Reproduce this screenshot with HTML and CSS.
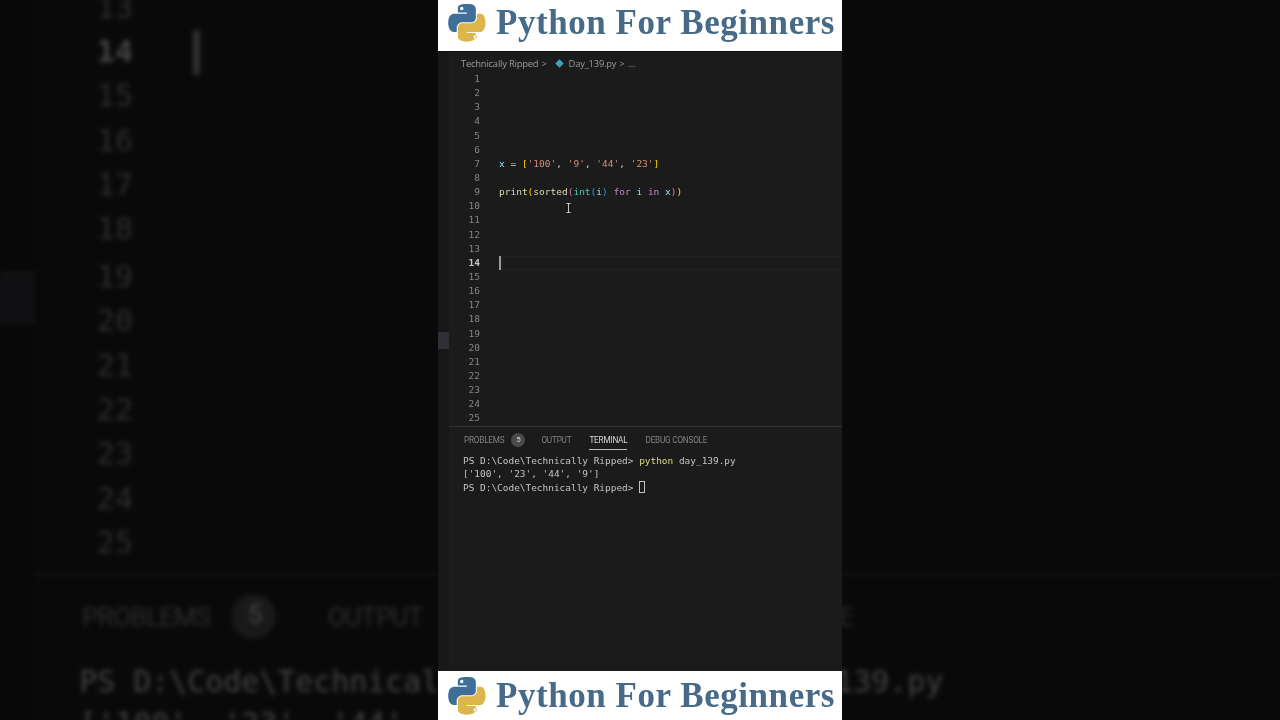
FILE: index.html
```html
<!DOCTYPE html>
<html lang="en">
<head>
<meta charset="utf-8">
<title>Python For Beginners</title>
<link rel="stylesheet" href="styles.css">
</head>
<body>
<div class="backdrop" aria-hidden="true">
  <div class="panel panel-zoomed">
    <div class="rail"><span class="slider"></span></div>
    <div class="main">
      <div class="crumbs"><span>Technically Ripped</span><span class="sep">&gt;</span><span class="file-dot"></span><span>Day_139.py</span><span class="sep">&gt;</span><span>...</span></div>
      <div class="editor">
        <div class="row"><span class="num">1</span></div>
        <div class="row"><span class="num">2</span></div>
        <div class="row"><span class="num">3</span></div>
        <div class="row"><span class="num">4</span></div>
        <div class="row"><span class="num">5</span></div>
        <div class="row"><span class="num">6</span></div>
        <div class="row"><span class="num">7</span></div>
        <div class="row"><span class="num">8</span></div>
        <div class="row"><span class="num">9</span></div>
        <div class="row"><span class="num">10</span></div>
        <div class="row"><span class="num">11</span></div>
        <div class="row"><span class="num">12</span></div>
        <div class="row"><span class="num">13</span></div>
        <div class="row current"><span class="num">14</span><span class="caret"></span></div>
        <div class="row"><span class="num">15</span></div>
        <div class="row"><span class="num">16</span></div>
        <div class="row"><span class="num">17</span></div>
        <div class="row"><span class="num">18</span></div>
        <div class="row"><span class="num">19</span></div>
        <div class="row"><span class="num">20</span></div>
        <div class="row"><span class="num">21</span></div>
        <div class="row"><span class="num">22</span></div>
        <div class="row"><span class="num">23</span></div>
        <div class="row"><span class="num">24</span></div>
        <div class="row"><span class="num">25</span></div>
      </div>
      <div class="bottom">
        <div class="tabs">
          <span>PROBLEMS</span><span class="badge">5</span><span class="tab-gap">OUTPUT</span><span class="tab-gap active">TERMINAL</span><span class="tab-gap">DEBUG CONSOLE</span>
        </div>
        <div class="terminal">
          <div class="term-line">PS D:\Code\Technically Ripped&gt; <span class="cmd">python</span> day_139.py</div>
          <div class="term-line">['100', '23', '44', '9']</div>
          <div class="term-line">PS D:\Code\Technically Ripped&gt; <span class="term-cursor"></span></div>
        </div>
      </div>
    </div>
  </div>
</div>

<div class="column">
  <header class="banner">
    <svg class="logo" viewBox="0 0 112 113"><path class="py-blue" d="M54.92 0C50.34.02 45.96.41 42.11 1.09 30.76 3.1 28.7 7.29 28.7 15.04V25.26H55.51V28.67H18.64C10.85 28.67 4.02 33.35 1.89 42.26-.57 52.47-.68 58.85 1.89 69.5 3.79 77.43 8.34 83.08 16.14 83.08H25.36V70.83C25.36 61.98 33.01 54.17 42.11 54.17H68.89C76.34 54.17 82.29 48.03 82.29 40.54V15.04C82.29 7.78 76.17 2.32 68.89 1.09 64.28.33 59.5-.02 54.92 0ZM40.42 8.23C43.19 8.23 45.45 10.53 45.45 13.36 45.45 16.17 43.19 18.45 40.42 18.45 37.64 18.45 35.39 16.17 35.39 13.36 35.39 10.53 37.64 8.23 40.42 8.23Z"/><path class="py-yellow" d="M85.64 28.67V40.5C85.64 49.67 77.86 57.5 68.89 57.5H42.11C34.77 57.5 28.7 63.78 28.7 71.13V96.63C28.7 103.89 35.01 108.17 42.11 110.25 50.6 112.75 58.74 113.2 68.89 110.25 75.63 108.3 82.29 104.37 82.29 96.63V86.4H55.51V83H95.7C103.49 83 106.4 77.56 109.11 69.5 111.91 61.1 111.79 53 109.11 42.2 107.18 34.4 103.5 28.67 95.7 28.67ZM80.64 93.2C83.42 93.2 85.67 95.48 85.67 98.29 85.67 101.12 83.42 103.42 80.64 103.42 77.87 103.42 75.61 101.12 75.61 98.29 75.61 95.48 77.87 93.2 80.64 93.2Z"/></svg>
    <span class="banner-title">Python For Beginners</span>
  </header>

  <div class="panel">
    <div class="rail"><span class="slider"></span></div>
    <div class="main">
      <div class="crumbs"><span>Technically Ripped</span><span class="sep">&gt;</span><span class="file-dot"></span><span>Day_139.py</span><span class="sep">&gt;</span><span>...</span></div>
      <div class="editor">
        <div class="row"><span class="num">1</span></div>
        <div class="row"><span class="num">2</span></div>
        <div class="row"><span class="num">3</span></div>
        <div class="row"><span class="num">4</span></div>
        <div class="row"><span class="num">5</span></div>
        <div class="row"><span class="num">6</span></div>
        <div class="row"><span class="num">7</span><code class="code"><span class="var">x</span> = <span class="br1">[</span><span class="str">'100'</span>, <span class="str">'9'</span>, <span class="str">'44'</span>, <span class="str">'23'</span><span class="br1">]</span></code></div>
        <div class="row"><span class="num">8</span></div>
        <div class="row"><span class="num">9</span><code class="code"><span class="fn">print</span><span class="br1">(</span><span class="fn">sorted</span><span class="br2">(</span><span class="ty">int</span><span class="br3">(</span><span class="var">i</span><span class="br3">)</span> <span class="kw">for</span> <span class="var">i</span> <span class="kw">in</span> <span class="var">x</span><span class="br2">)</span><span class="br1">)</span></code></div>
        <div class="row"><span class="num">10</span></div>
        <div class="row"><span class="num">11</span></div>
        <div class="row"><span class="num">12</span></div>
        <div class="row"><span class="num">13</span></div>
        <div class="row current"><span class="num">14</span><span class="caret"></span></div>
        <div class="row"><span class="num">15</span></div>
        <div class="row"><span class="num">16</span></div>
        <div class="row"><span class="num">17</span></div>
        <div class="row"><span class="num">18</span></div>
        <div class="row"><span class="num">19</span></div>
        <div class="row"><span class="num">20</span></div>
        <div class="row"><span class="num">21</span></div>
        <div class="row"><span class="num">22</span></div>
        <div class="row"><span class="num">23</span></div>
        <div class="row"><span class="num">24</span></div>
        <div class="row"><span class="num">25</span></div>
        <svg class="ibeam" viewBox="0 0 5 10"><path d="M0.5 .5H4.500M2.500 .5V9.500M.5 9.500H4.500"/></svg>
      </div>
      <div class="bottom">
        <div class="tabs">
          <span>PROBLEMS</span><span class="badge">5</span><span class="tab-gap">OUTPUT</span><span class="tab-gap active">TERMINAL</span><span class="tab-gap">DEBUG CONSOLE</span>
        </div>
        <div class="terminal">
          <div class="term-line">PS D:\Code\Technically Ripped&gt; <span class="cmd">python</span> day_139.py</div>
          <div class="term-line">['100', '23', '44', '9']</div>
          <div class="term-line">PS D:\Code\Technically Ripped&gt; <span class="term-cursor"></span></div>
        </div>
      </div>
    </div>
  </div>

  <footer class="banner banner-foot">
    <svg class="logo" viewBox="0 0 112 113"><path class="py-blue" d="M54.92 0C50.34.02 45.96.41 42.11 1.09 30.76 3.1 28.7 7.29 28.7 15.04V25.26H55.51V28.67H18.64C10.85 28.67 4.02 33.35 1.89 42.26-.57 52.47-.68 58.85 1.89 69.5 3.79 77.43 8.34 83.08 16.14 83.08H25.36V70.83C25.36 61.98 33.01 54.17 42.11 54.17H68.89C76.34 54.17 82.29 48.03 82.29 40.54V15.04C82.29 7.78 76.17 2.32 68.89 1.09 64.28.33 59.5-.02 54.92 0ZM40.42 8.23C43.19 8.23 45.45 10.53 45.45 13.36 45.45 16.17 43.19 18.45 40.42 18.45 37.64 18.45 35.39 16.17 35.39 13.36 35.39 10.53 37.64 8.23 40.42 8.23Z"/><path class="py-yellow" d="M85.64 28.67V40.5C85.64 49.67 77.86 57.5 68.89 57.5H42.11C34.77 57.5 28.7 63.78 28.7 71.13V96.63C28.7 103.89 35.01 108.17 42.11 110.25 50.6 112.75 58.74 113.2 68.89 110.25 75.63 108.3 82.29 104.37 82.29 96.63V86.4H55.51V83H95.7C103.49 83 106.4 77.56 109.11 69.5 111.91 61.1 111.79 53 109.11 42.2 107.18 34.4 103.5 28.67 95.7 28.67ZM80.64 93.2C83.42 93.2 85.67 95.48 85.67 98.29 85.67 101.12 83.42 103.42 80.64 103.42 77.87 103.42 75.61 101.12 75.61 98.29 75.61 95.48 77.87 93.2 80.64 93.2Z"/></svg>
    <span class="banner-title">Python For Beginners</span>
  </footer>
</div>
</body>
</html>
```

FILE: styles.css
```css
* { box-sizing: border-box; }
html, body { margin: 0; height: 100%; }
body {
  width: 1280px;
  height: 720px;
  overflow: hidden;
  background: #0a0a0a;
  display: flex;
  justify-content: center;
  position: relative;
}

/* Blurred, dimmed, enlarged copy of the video behind the column */
.backdrop {
  position: absolute;
  inset: 0;
  overflow: hidden;
  background: #0a0a0a;
}
.panel-zoomed {
  position: absolute;
  left: 0;
  top: 0;
  width: 404px;
  height: 620px;
  transform-origin: 0 0;
  transform: translateY(-616px) scale(3.168);
  filter: blur(0.6px) brightness(0.34);
}

.column {
  position: relative;
  width: 404px;
  height: 720px;
  display: flex;
  flex-direction: column;
}

.banner {
  height: 52px;
  flex: none;
  background: #fff;
  border-bottom: 1px solid #0c0c0c;
  display: flex;
  align-items: flex-start;
  padding: 4px 0 0 10px;
  gap: 10px;
}
.banner-foot {
  height: 49px;
  border-bottom: 0;
  padding-top: 6px;
}
.logo { width: 38px; height: 38px; flex: none; filter: blur(0.4px); }
.py-blue { fill: #3f6f98; }
.py-yellow { fill: #dcb64a; }
.banner-title {
  font-family: "Liberation Serif", serif;
  font-weight: 700;
  font-size: 35px;
  line-height: 37px;
  letter-spacing: 0.55px;
  color: #466a88;
  white-space: nowrap;
  filter: blur(0.35px);
}

.panel {
  flex: 1;
  display: flex;
  background: #1b1b1b;
  min-height: 0;
  overflow: hidden;
}
.rail {
  width: 11px;
  flex: none;
  background: #181818;
  position: relative;
}
.slider {
  position: absolute;
  left: 0;
  top: 280px;
  width: 11px;
  height: 17px;
  background: #2f3035;
}
.main {
  flex: 1;
  min-width: 0;
  display: flex;
  flex-direction: column;
  filter: blur(0.35px);
}

.crumbs {
  height: 19px;
  flex: none;
  display: flex;
  align-items: center;
  gap: 3px;
  padding: 3px 0 0 12px;
  font: 9.400px "Open Sans", "Liberation Sans", sans-serif;
  letter-spacing: -0.2px;
  color: #9a9a9a;
}
.sep { color: #999; margin-right: 1px; }
.file-dot {
  width: 7px;
  height: 7px;
  margin: 0 3px 0 5px;
  background: #3f9fc4;
  transform: rotate(45deg) scale(0.85);
}

.editor {
  flex: 1;
  min-height: 0;
  position: relative;
  padding-top: 1px;
  font: 9.500px/14.150px "DejaVu Sans Mono", "Liberation Mono", monospace;
}
.row {
  height: 14.150px;
  display: flex;
  align-items: center;
  white-space: pre;
  color: #d4d4d4;
}
.num {
  width: 31px;
  flex: none;
  text-align: right;
  color: #858585;
}
.code {
  margin-left: 19px;
  font: inherit;
}
.current { position: relative; }
.current::after {
  content: "";
  position: absolute;
  left: 53px;
  right: 0;
  top: 0;
  bottom: 0;
  border: 1px solid #222;
  border-right: 0;
}
.current .num { color: #c6c6c6; font-weight: 700; }
.caret {
  width: 1.500px;
  height: 14px;
  margin-left: 19px;
  background: #9a9a9a;
}
.ibeam {
  position: absolute;
  left: 117px;
  top: 132px;
  width: 5px;
  height: 10px;
  fill: none;
  stroke: #c8c8c8;
  stroke-width: 1;
}
.var { color: #9cdcfe; }
.str { color: #ce9178; }
.fn { color: #dcdcaa; }
.ty { color: #4ec9b0; }
.kw { color: #c586c0; }
.br1 { color: #ffd700; }
.br2 { color: #da70d6; }
.br3 { color: #179fff; }

.bottom {
  height: 245px;
  flex: none;
  border-top: 1px solid #333;
  display: flex;
  flex-direction: column;
}
.tabs {
  display: flex;
  align-items: center;
  height: 25px;
  padding: 0 0 0 15px;
  font: 8.200px Roboto, "Liberation Sans", sans-serif;
  letter-spacing: -0.2px;
  color: #828282;
}
.badge {
  width: 14px;
  height: 14px;
  margin-left: 7px;
  border-radius: 50%;
  background: #4a4a4a;
  color: #cfcfcf;
  font-size: 8px;
  display: flex;
  align-items: center;
  justify-content: center;
}
.tab-gap { margin-left: 18px; position: relative; }
.badge + .tab-gap { margin-left: 16px; }
.active { color: #d8d8d8; }
.active::after {
  content: "";
  position: absolute;
  left: 0;
  right: 0;
  bottom: -5px;
  height: 1px;
  background: #bdbdbd;
}
.terminal {
  padding: 3px 0 0 14px;
  font: 9.450px/12.800px "DejaVu Sans Mono", "Liberation Mono", monospace;
  color: #c4c4c4;
}
.term-line { white-space: pre; }
.cmd { color: #d7dc7e; }
.term-cursor {
  display: inline-block;
  width: 6px;
  height: 12px;
  vertical-align: -2px;
  border: 1px solid #c4c4c4;
}
```
